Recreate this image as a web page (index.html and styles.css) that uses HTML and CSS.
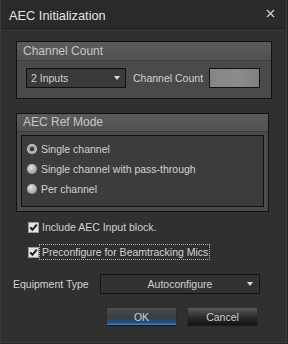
FILE: index.html
```
<!DOCTYPE html>
<html lang="en">
<head>
    <meta charset="UTF-8">
    <title>AEC Initialization</title>
    <link rel="stylesheet" href="styles.css">
</head>
<body>
    <div class="window">
        <div class="titlebar">
            <span class="title">AEC Initialization</span>
            <svg class="close" width="9" height="9" viewBox="0 0 9 9">
                <path d="M1 1 L8 8 M8 1 L1 8" stroke="#cfcfcf" stroke-width="1.3" fill="none"/>
            </svg>
        </div>

        <div class="content">
            <div class="group group-count">
                <div class="group-header">Channel Count</div>
                <div class="group-body count-row">
                    <div class="select">
                        <span>2 Inputs</span>
                        <span class="arrow"></span>
                    </div>
                    <span class="count-label">Channel Count</span>
                    <div class="count-input"></div>
                </div>
            </div>

            <div class="group group-ref">
                <div class="group-header">AEC Ref Mode</div>
                <div class="group-body ref-body">
                    <div class="radio-box">
                        <div class="option"><span class="radio checked"></span>Single channel</div>
                        <div class="option"><span class="radio"></span>Single channel with pass-through</div>
                        <div class="option"><span class="radio"></span>Per channel</div>
                    </div>
                </div>
            </div>

            <div class="check-row first">
                <svg class="check" width="11" height="11" viewBox="0 0 11 11">
                    <rect x="0.5" y="0.5" width="10" height="10" fill="#e4e4e4" stroke="#9a9a9a"/>
                    <path d="M2.3 5.3 L4.4 7.8 L8.8 2.6" stroke="#1a1a1a" stroke-width="2" fill="none"/>
                </svg>
                <span>Include AEC Input block.</span>
            </div>
            <div class="check-row">
                <svg class="check" width="11" height="11" viewBox="0 0 11 11">
                    <rect x="0.5" y="0.5" width="10" height="10" fill="#e4e4e4" stroke="#9a9a9a"/>
                    <path d="M2.3 5.3 L4.4 7.8 L8.8 2.6" stroke="#1a1a1a" stroke-width="2" fill="none"/>
                </svg>
                <span class="focused">Preconfigure for Beamtracking Mics</span>
            </div>

            <div class="equipment-row">
                <span class="equipment-label">Equipment Type</span>
                <div class="select wide">
                    <span class="centered">Autoconfigure</span>
                    <span class="arrow"></span>
                </div>
            </div>

            <div class="buttons">
                <button type="button" class="btn btn-ok">OK</button>
                <button type="button" class="btn btn-cancel">Cancel</button>
            </div>
        </div>
    </div>
</body>
</html>
```
FILE: styles.css
```
body {
    margin: 0;
    background-color: #262626;
    font-family: "Liberation Sans", Arial, sans-serif;
    font-size: 10.5px;
    color: #d2d2d2;
}

.window {
    width: 285px;
    height: 342px;
    background-color: #303030;
    border: 1px solid #3b3b3b;
    border-top: none;
}

.titlebar {
    height: 28px;
    background-color: #2a2a2a;
    border-bottom: 1px solid #1c1c1c;
    display: flex;
    align-items: center;
    padding: 0 8px;
}

.title {
    font-size: 12.8px;
    color: #e4e4e4;
    flex: 1;
    padding-top: 2px;
}

.close {
    margin-right: 3px;
    margin-top: -1px;
}

.content {
    padding: 11px 0 0 12px;
    border-top: 1px solid #363636;
}

.group {
    margin-left: 3px;
    border: 1px solid #111;
    box-sizing: border-box;
    background-color: #4a4a4a;
}

.group-count {
    width: 256px;
    height: 58px;
}

.group-ref {
    width: 253px;
    height: 99px;
    margin-top: 14px;
}

.group-header {
    height: 18px;
    line-height: 18px;
    padding-left: 6px;
    font-size: 12px;
    color: #c6c6c6;
    background: linear-gradient(#5b5b5b, #515151);
    border-bottom: 1px solid #3c3c3c;
}

.group-ref .group-header {
    height: 17px;
    line-height: 17px;
}

.count-row {
    display: flex;
    align-items: center;
    padding: 7px 11px 0 9px;
}

.select {
    width: 100px;
    height: 20px;
    box-sizing: border-box;
    border: 1px solid #111;
    background-color: #3a3a3a;
    display: flex;
    align-items: center;
    padding: 0 3px 0 4px;
    color: #d0d0d0;
}

.select span:first-child {
    flex: 1;
}

.arrow {
    width: 0;
    height: 0;
    border-left: 3.5px solid transparent;
    border-right: 3.5px solid transparent;
    border-top: 4px solid #dadada;
    margin-right: 2px;
}

.count-label {
    margin-left: 7px;
}

.count-input {
    margin-left: auto;
    width: 51px;
    height: 20px;
    box-sizing: border-box;
    border: 1px solid #111;
    background: linear-gradient(90deg, #858585, #8c8c8c 60%, #7f7f7f);
}

.ref-body {
    padding: 3px 4px 4px;
}

.radio-box {
    height: 72px;
    box-sizing: border-box;
    border: 1px solid #111;
    background-color: #3c3c3c;
    padding: 3px 0 0 5px;
}

.option {
    height: 20px;
    display: flex;
    align-items: center;
}

.radio {
    width: 10px;
    height: 10px;
    border-radius: 50%;
    margin-right: 4px;
    background: radial-gradient(circle at 40% 35%, #e2e2e2, #a0a0a0 70%, #7a7a7a);
}

.radio.checked {
    background: radial-gradient(circle, #3a3a3a 0, #3a3a3a 24%, #9a9a9a 36%, #d0d0d0 70%, #8a8a8a);
}

.check-row {
    height: 20px;
    display: flex;
    align-items: center;
    margin: 5px 0 0 15px;
}

.check-row.first {
    margin-top: 5px;
}

.check {
    margin-right: 3px;
}

.focused {
    outline: 1px dotted #b0b0b0;
    outline-offset: 1px;
    padding: 0 0 0 1px;
    margin-left: -1px;
}

.equipment-row {
    display: flex;
    align-items: center;
    margin-top: 12px;
}

.equipment-label {
    width: 87px;
}

.select.wide {
    width: 160px;
    background-color: #323232;
    padding-right: 4px;
}

.centered {
    text-align: center;
    padding-left: 8px;
}

.buttons {
    display: flex;
    gap: 12px;
    margin: 14px 0 0 94px;
}

.btn {
    width: 69px;
    height: 17px;
    padding: 0;
    border: none;
    font-family: "Liberation Sans", Arial, sans-serif;
    font-size: 10.5px;
    color: #cfcfcf;
    cursor: pointer;
}

.btn-ok {
    background: linear-gradient(#4d4d4d, #3a3e42 55%, #24507a 85%, #2b8ee0);
    box-shadow: 0 1px 1px #1a1a1a;
}

.btn-cancel {
    background: linear-gradient(#5a5a5a, #2a2a2a 55%, #141414);
    box-shadow: 0 1px 1px #1a1a1a;
}
```
